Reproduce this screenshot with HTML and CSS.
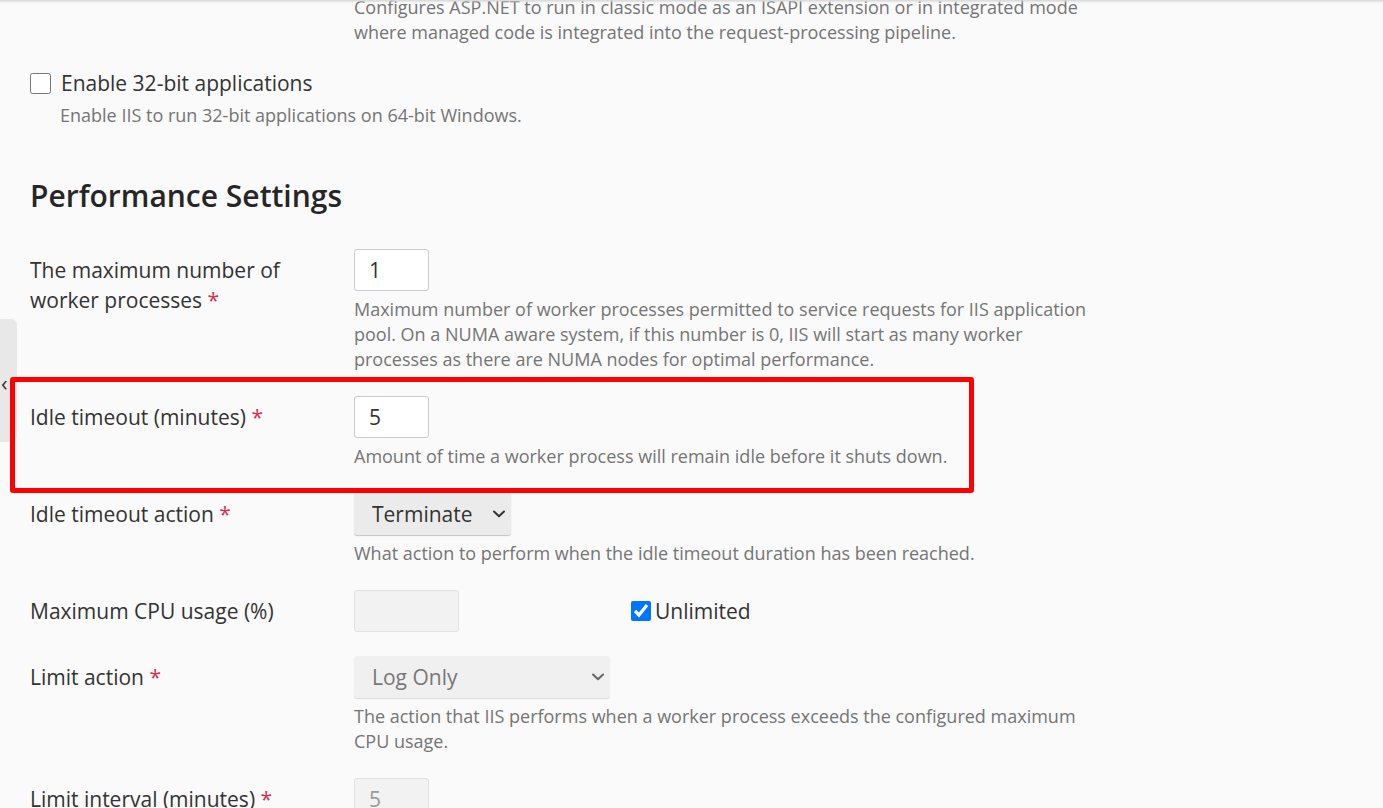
FILE: index.html
```html
<!DOCTYPE html>
<html lang="en">
<head>
<meta charset="utf-8">
<title>Application Pool Settings</title>
<link rel="stylesheet" href="styles.css">
</head>
<body>
<div class="top-shadow"></div>
<div class="side-tab"><span class="side-chevron">&#8249;</span></div>
<main class="page">
  <p class="desc top-desc">Configures ASP.NET to run in classic mode as an ISAPI extension or in integrated mode where managed code is integrated into the request-processing pipeline.</p>

  <div class="check-row">
    <label class="check-label"><input type="checkbox" class="cb"><span>Enable 32-bit applications</span></label>
    <p class="desc check-desc">Enable IIS to run 32-bit applications on 64-bit Windows.</p>
  </div>

  <h2 class="section-title">Performance Settings</h2>

  <div class="form-row">
    <label class="field-label">The maximum number of worker processes <span class="req">*</span></label>
    <div class="field">
      <input type="text" class="text-input w-small" value="1">
      <p class="desc">Maximum number of worker processes permitted to service requests for IIS application pool. On a NUMA aware system, if this number is 0, IIS will start as many worker processes as there are NUMA nodes for optimal performance.</p>
    </div>
  </div>

  <div class="form-row highlighted">
    <label class="field-label">Idle timeout (minutes) <span class="req">*</span></label>
    <div class="field">
      <input type="text" class="text-input w-small" value="5">
      <p class="desc">Amount of time a worker process will remain idle before it shuts down.</p>
    </div>
  </div>

  <div class="form-row">
    <label class="field-label">Idle timeout action <span class="req">*</span></label>
    <div class="field">
      <div class="select-wrap">
        <select class="select w-term"><option>Terminate</option><option>Suspend</option></select>
        <svg class="chev" width="12" height="8" viewBox="0 0 12 8" aria-hidden="true"><path d="M1 1.5 L6 6.2 L11 1.5" fill="none" stroke="#333" stroke-width="2" stroke-linecap="round" stroke-linejoin="round"/></svg>
      </div>
      <p class="desc">What action to perform when the idle timeout duration has been reached.</p>
    </div>
  </div>

  <div class="form-row">
    <label class="field-label">Maximum CPU usage (%)</label>
    <div class="field inline-field">
      <input type="text" class="text-input w-mid" value="" disabled>
      <label class="unlimited"><input type="checkbox" class="cb" checked><span>Unlimited</span></label>
    </div>
  </div>

  <div class="form-row">
    <label class="field-label">Limit action <span class="req">*</span></label>
    <div class="field">
      <div class="select-wrap">
        <select class="select w-wide" disabled><option>Log Only</option></select>
        <svg class="chev" width="12" height="8" viewBox="0 0 12 8" aria-hidden="true"><path d="M1 1.5 L6 6.2 L11 1.5" fill="none" stroke="#666" stroke-width="2" stroke-linecap="round" stroke-linejoin="round"/></svg>
      </div>
      <p class="desc">The action that IIS performs when a worker process exceeds the configured maximum CPU usage.</p>
    </div>
  </div>

  <div class="form-row">
    <label class="field-label">Limit interval (minutes) <span class="req">*</span></label>
    <div class="field">
      <input type="text" class="text-input w-small" value="5" disabled>
    </div>
  </div>
</main>
</body>
</html>
```
FILE: styles.css
```css
*, *::before, *::after { box-sizing: border-box; }

html, body {
  margin: 0;
  padding: 0;
  background: #fafafa;
  overflow: hidden;
}

body {
  font-family: "Open Sans", "Liberation Sans", sans-serif;
  color: #333;
  height: 808px;
}

.top-shadow {
  position: fixed;
  top: 0;
  left: 0;
  right: 0;
  height: 3px;
  background: linear-gradient(#d6d6d6, rgba(250,250,250,0));
  z-index: 5;
}

.side-tab {
  position: fixed;
  left: 0;
  top: 319px;
  width: 17px;
  height: 123px;
  background: #e8e8e8;
  border-radius: 0 6px 6px 0;
  z-index: 1;
}

.side-chevron {
  position: absolute;
  left: 1px;
  top: 52px;
  font-size: 22px;
  line-height: 22px;
  color: #333;
}

.page {
  padding-left: 30px;
  width: 1110px;
}

.desc {
  margin: 0;
  font-size: 18px;
  line-height: 25px;
  color: #757575;
  max-width: 750px;
}

.top-desc {
  margin-left: 324px;
  margin-top: -5px;
}

.check-row {
  margin-top: 23px;
}

.check-label {
  display: flex;
  align-items: center;
  gap: 10px;
  font-size: 21px;
  line-height: 30px;
  color: #333;
}

.cb {
  width: 21px;
  height: 21px;
  margin: 0;
  flex: none;
}

.check-desc {
  margin-left: 30px;
  margin-top: 5px;
}

.section-title {
  margin: 50px 0 0;
  font-size: 30px;
  line-height: 35px;
  font-weight: 600;
  color: #262626;
}

.form-row {
  display: grid;
  grid-template-columns: 324px 1fr;
  margin-top: 24px;
}

.section-title + .form-row {
  margin-top: 36px;
}

.highlighted {
  position: relative;
}

.highlighted::after {
  content: "";
  position: absolute;
  left: -20px;
  top: -19px;
  width: 964px;
  height: 116px;
  border: 5px solid #ff0000;
  border-radius: 3px;
  z-index: 3;
  pointer-events: none;
}

.field-label {
  padding-top: 6px;
  padding-right: 40px;
  font-size: 21px;
  line-height: 30px;
  color: #333;
}

.req {
  color: #d9304f;
}

.field .desc {
  margin-top: 6px;
}

.text-input {
  display: block;
  height: 42px;
  padding: 0 14px;
  font-family: inherit;
  font-size: 21px;
  color: #333;
  background: #fff;
  border: 1px solid #c6ccd2;
  border-radius: 3px;
  outline: none;
}

.text-input:disabled {
  background: #f2f2f2;
  border-color: #e2e2e2;
  color: #999;
}

.w-small { width: 75px; }
.w-mid { width: 105px; }
.w-term { width: 157px; }
.w-wide { width: 256px; }

.select-wrap {
  position: relative;
  width: max-content;
}

.select {
  display: block;
  height: 42px;
  padding: 0 30px 0 18px;
  font-family: inherit;
  font-size: 21px;
  color: #333;
  background-color: #ebebeb;
  border: none;
  border-radius: 3px;
  box-shadow: 0 1px 1px rgba(0,0,0,0.22);
  -webkit-appearance: none;
  appearance: none;
  outline: none;
}

.select:disabled {
  background-color: #f0f0f0;
  color: #777;
  box-shadow: 0 1px 1px rgba(0,0,0,0.12);
  opacity: 1;
}

.chev {
  position: absolute;
  right: 6px;
  top: 17px;
  pointer-events: none;
}

.inline-field {
  display: flex;
  align-items: center;
}

.unlimited {
  display: flex;
  align-items: center;
  gap: 4px;
  margin-left: 172px;
  font-size: 21px;
  line-height: 30px;
  color: #333;
}

.unlimited .cb {
  width: 20px;
  height: 20px;
}
```
